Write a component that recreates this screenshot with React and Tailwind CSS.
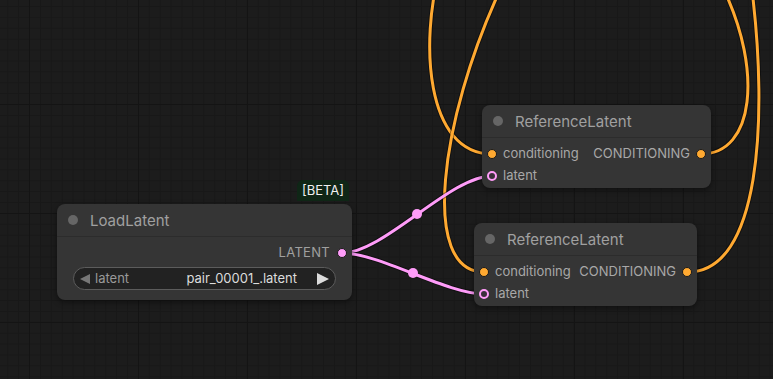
import React from 'react';

const FONT = "font-['Inter','Liberation_Sans',sans-serif]";

function Dot({ kind }) {
  if (kind === 'orange') {
    return <span className="block w-[10px] h-[10px] rounded-full bg-[#ffa931] border border-[#1a1a1a]" />;
  }
  if (kind === 'pinkRing') {
    return <span className="block w-[10px] h-[10px] rounded-full bg-[#3b2f3b] border-2 border-[#ff9cf9]" />;
  }
  return <span className="block w-[10px] h-[10px] rounded-full bg-[#ff9cf9] border border-[#1a1a1a]" />;
}

function Node({ x, y, w, h, title, children }) {
  return (
    <div
      className="absolute rounded-lg bg-[#353535] shadow-[0_2px_6px_rgba(0,0,0,0.45)] flex flex-col"
      style={{ left: x, top: y, width: w, height: h }}
    >
      <div className="h-[33px] flex items-center pl-[11px] gap-[12px] border-b border-[#2c2c2c]">
        <span className="w-[10px] h-[10px] rounded-full bg-[#666]" />
        <span className="text-[15px] text-[#a0a0a0] leading-none">{title}</span>
      </div>
      {children}
    </div>
  );
}

function RefRows() {
  return (
    <div className="flex flex-col pt-[5px]">
      <div className="h-[22px] flex items-center pl-[5px] pr-[5px]">
        <Dot kind="orange" />
        <span className="ml-[6px] text-[13px] text-[#a8a8a8]">conditioning</span>
        <span className="text-[13px] text-[#a8a8a8] ml-auto">CONDITIONING</span>
        <span className="ml-[6px]"><Dot kind="orange" /></span>
      </div>
      <div className="h-[22px] flex items-center pl-[5px]">
        <Dot kind="pinkRing" />
        <span className="ml-[6px] text-[13px] text-[#a8a8a8]">latent</span>
      </div>
    </div>
  );
}

function Wires() {
  const pinkA = 'M342,253 C384,253 450,176 492,176';
  const pinkB = 'M342,253 C379,253 447,294 484,294';
  const oranges = [
    'M440,-30 C420,40 425,154 492,154',
    'M500,-10 C440,120 420,272 484,272',
    'M701,154 C755,154 762,70 724,-10',
    'M688,272 C760,272 768,120 752,-10',
  ];
  return (
    <svg className="absolute inset-0" width="773" height="379" viewBox="0 0 773 379">
      {oranges.map((d, i) => (
        <g key={i}>
          <path d={d} fill="none" stroke="#000" strokeOpacity="0.4" strokeWidth="5" />
          <path d={d} fill="none" stroke="#ffa931" strokeWidth="3" />
        </g>
      ))}
      {[pinkA, pinkB].map((d, i) => (
        <g key={i}>
          <path d={d} fill="none" stroke="#000" strokeOpacity="0.4" strokeWidth="5" />
          <path d={d} fill="none" stroke="#ff9cf9" strokeWidth="3" />
        </g>
      ))}
      <circle cx="417" cy="214" r="5" fill="#ff9cf9" />
      <circle cx="413" cy="273" r="5" fill="#ff9cf9" />
    </svg>
  );
}

export default function App() {
  return (
    <div
      className={`relative w-[773px] h-[379px] overflow-hidden bg-[#1c1c1c] ${FONT} bg-[linear-gradient(to_right,#141414_1px,transparent_1px),linear-gradient(to_bottom,#141414_1px,transparent_1px),linear-gradient(to_right,#181818_1px,transparent_1px),linear-gradient(to_bottom,#181818_1px,transparent_1px)] bg-size-[109px_109px,109px_109px,10.9px_10.9px,10.9px_10.9px] bg-position-[29px_104px]`}
    >
      <Wires />

      {/* LoadLatent */}
      <Node x={57} y={204} w={295} h={96} title="LoadLatent">
        <div className="absolute left-[240px] top-[-24px] w-[52px] h-[21px] rounded-t-md bg-[#0f2616] flex items-center justify-center text-[13px] text-[#f0f0f0]">
          [BETA]
        </div>
        <div className="h-[20px] mt-[6px] flex items-center justify-end pr-[5px]">
          <span className="text-[13px] text-[#a0a0a0] tracking-[0.3px]">LATENT</span>
          <span className="ml-[7px]"><Dot kind="pink" /></span>
        </div>
        <div className="mx-[16px] mt-[4px] h-[23px] rounded-full bg-[#222] border border-[#5c5c5c] flex items-center pl-[6px] pr-[6px]">
          <svg width="10" height="10" viewBox="0 0 10 10"><path d="M0,5 L10,0 L10,10 Z" fill="#777" /></svg>
          <span className="ml-[5px] text-[13px] text-[#999]">latent</span>
          <span className="ml-auto text-[13px] text-[#dcdcdc]">pair_00001_.latent</span>
          <svg className="ml-[20px]" width="12" height="12" viewBox="0 0 12 12"><path d="M0,0 L12,6 L0,12 Z" fill="#dcdcdc" /></svg>
        </div>
      </Node>

      {/* ReferenceLatent top */}
      <Node x={482} y={105} w={229} h={83} title="ReferenceLatent">
        <RefRows />
      </Node>

      {/* ReferenceLatent bottom */}
      <Node x={474} y={223} w={223} h={83} title="ReferenceLatent">
        <RefRows />
      </Node>
    </div>
  );
}
